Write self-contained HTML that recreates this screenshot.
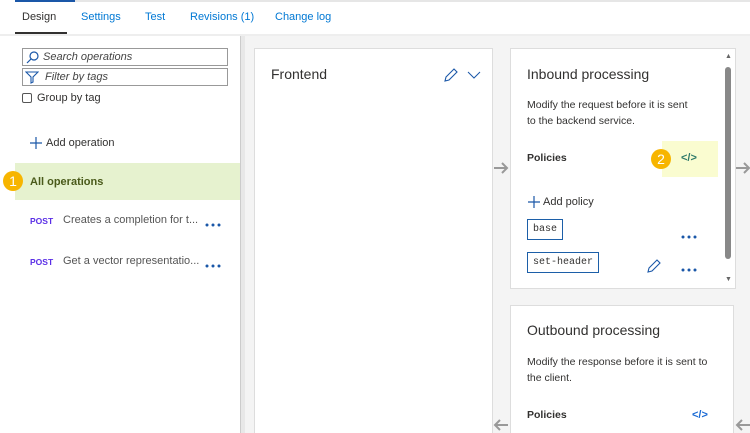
<!DOCTYPE html>
<html><head><meta charset="utf-8"><style>
*{box-sizing:border-box;margin:0;padding:0}
html,body{width:750px;height:433px;overflow:hidden}
body{background:#fff;font-family:"Liberation Sans",sans-serif;position:relative;font-size:11px;color:#323130}
.a{position:absolute}
.tab{position:absolute;top:11px;font-size:11px;color:#0078d4}
.card{position:absolute;background:#fff;border:1px solid #ddd}
.pol{position:absolute;border:1px solid #1c5fa8;font-family:"Liberation Mono",monospace;font-size:10px;padding:4px 5px;color:#323130}
.badge{position:absolute;width:20px;height:20px;border-radius:50%;background:#f7b500;color:#fff;font-size:14px;text-align:center;line-height:20px}
</style></head><body>
<div class="a" style="left:15px;top:0;width:60px;height:2px;background:#1a57a8"></div>
<div class="a" style="left:75px;top:0;width:675px;height:2px;background:#e6e6e6"></div>
<div class="tab" style="left:22px;color:#323130">Design</div>
<div class="a" style="left:15px;top:32px;width:52px;height:2px;background:#323130"></div>
<div class="tab" style="left:81px">Settings</div>
<div class="tab" style="left:145px">Test</div>
<div class="tab" style="left:190px">Revisions (1)</div>
<div class="tab" style="left:275px">Change log</div>
<div class="a" style="left:0;top:34px;width:750px;height:2px;background:#eee"></div>
<div class="a" style="left:240px;top:36px;width:5px;height:397px;background:#e8e8e8;border-left:1px solid #ccc"></div>
<div class="a" style="left:245px;top:36px;width:505px;height:397px;background:#f4f4f4"></div>
<!-- left -->
<div class="a" style="left:22px;top:48px;width:206px;height:18px;border:1px solid #999;font-style:italic;font-size:11px;padding:2px 0 0 20px;color:#444">Search operations</div>
<svg class="a" style="left:26px;top:50px" width="14" height="14"><circle cx="8" cy="6" r="4" fill="none" stroke="#1a57a8" stroke-width="1.2"/><path d="M5 9L1 13" stroke="#1a57a8" stroke-width="1.2"/></svg>
<div class="a" style="left:22px;top:68px;width:206px;height:18px;border:1px solid #999;font-style:italic;font-size:11px;padding:2px 0 0 22px;color:#444">Filter by tags</div>
<svg class="a" style="left:25px;top:70px" width="14" height="14"><path d="M1 2H13L8 7V12L6 13V7Z" fill="none" stroke="#1a57a8" stroke-width="1.1"/></svg>
<div class="a" style="left:22px;top:93px;width:10px;height:10px;border:1px solid #555;border-radius:2px"></div>
<div class="a" style="left:37px;top:92px;font-size:11px">Group by tag</div>
<svg class="a" style="left:29px;top:136px" width="14" height="14"><path d="M7 1V13M1 7H13" stroke="#1a57a8" stroke-width="1.2"/></svg>
<div class="a" style="left:46px;top:137px">Add operation</div>
<div class="a" style="left:15px;top:163px;width:225px;height:37px;background:#e6f2cf"></div>
<div class="badge" style="left:3px;top:171px">1</div>
<div class="a" style="left:30px;top:176px;font-weight:bold;color:#4a5a1a">All operations</div>
<div class="a" style="left:30px;top:216px;font-size:8.5px;font-weight:bold;color:#5a2ee6">POST</div>
<div class="a" style="left:63px;top:214px;color:#555">Creates a completion for t...</div>
<svg class="a" style="left:205px;top:223px" width="16" height="4"><circle cx="2" cy="2" r="1.5" fill="#1a57a8"/><circle cx="8" cy="2" r="1.5" fill="#1a57a8"/><circle cx="14" cy="2" r="1.5" fill="#1a57a8"/></svg>
<div class="a" style="left:30px;top:257px;font-size:8.5px;font-weight:bold;color:#5a2ee6">POST</div>
<div class="a" style="left:63px;top:255px;color:#555">Get a vector representatio...</div>
<svg class="a" style="left:205px;top:264px" width="16" height="4"><circle cx="2" cy="2" r="1.5" fill="#1a57a8"/><circle cx="8" cy="2" r="1.5" fill="#1a57a8"/><circle cx="14" cy="2" r="1.5" fill="#1a57a8"/></svg>
<!-- frontend -->
<div class="card" style="left:254px;top:48px;width:239px;height:390px"></div>
<div class="a" style="left:271px;top:66px;font-size:14px">Frontend</div>
<svg class="a" style="left:443px;top:67px" width="40" height="16"><path d="M2 14L3 10L11 2L14 5L6 13Z" fill="none" stroke="#1a57a8" stroke-width="1.1"/><path d="M25 5L31 11L37 5" fill="none" stroke="#1a57a8" stroke-width="1"/></svg>
<!-- arrows -->
<svg class="a" style="left:493px;top:161px" width="16" height="14"><path d="M1 7H14M9 2L14 7L9 12" fill="none" stroke="#999" stroke-width="2"/></svg>
<svg class="a" style="left:735px;top:161px" width="16" height="14"><path d="M1 7H14M9 2L14 7L9 12" fill="none" stroke="#999" stroke-width="2"/></svg>
<svg class="a" style="left:493px;top:418px" width="16" height="14"><path d="M15 7H2M7 2L2 7L7 12" fill="none" stroke="#999" stroke-width="2"/></svg>
<svg class="a" style="left:735px;top:418px" width="16" height="14"><path d="M15 7H2M7 2L2 7L7 12" fill="none" stroke="#999" stroke-width="2"/></svg>
<!-- inbound -->
<div class="card" style="left:510px;top:48px;width:226px;height:241px"></div>
<div class="a" style="left:527px;top:66px;font-size:14px">Inbound processing</div>
<div class="a" style="left:527px;top:97px;font-size:10.5px;line-height:16px">Modify the request before it is sent<br>to the backend service.</div>
<div class="a" style="left:527px;top:152px;font-weight:bold;font-size:10.5px">Policies</div>
<div class="a" style="left:662px;top:141px;width:56px;height:36px;background:#fafcd0"></div>
<div class="badge" style="left:651px;top:149px">2</div>
<div class="a" style="left:681px;top:152px;color:#2f7a6a;font-size:11px;font-weight:bold">&lt;/&gt;</div>
<svg class="a" style="left:527px;top:195px" width="14" height="14"><path d="M7 1V13M1 7H13" stroke="#1a57a8" stroke-width="1.2"/></svg>
<div class="a" style="left:543px;top:196px;font-size:11px">Add policy</div>
<div class="pol" style="left:527px;top:219px">base</div>
<svg class="a" style="left:681px;top:235px" width="16" height="4"><circle cx="2" cy="2" r="1.5" fill="#1a57a8"/><circle cx="8" cy="2" r="1.5" fill="#1a57a8"/><circle cx="14" cy="2" r="1.5" fill="#1a57a8"/></svg>
<div class="pol" style="left:527px;top:252px">set-header</div>
<svg class="a" style="left:646px;top:258px" width="16" height="16"><path d="M2 14L3 10L11 2L14 5L6 13Z" fill="none" stroke="#1a57a8" stroke-width="1.1"/></svg>
<svg class="a" style="left:681px;top:268px" width="16" height="4"><circle cx="2" cy="2" r="1.5" fill="#1a57a8"/><circle cx="8" cy="2" r="1.5" fill="#1a57a8"/><circle cx="14" cy="2" r="1.5" fill="#1a57a8"/></svg>
<div class="a" style="left:725px;top:53px;font-size:7px;color:#666">▲</div>
<div class="a" style="left:725px;top:67px;width:6px;height:192px;border-radius:3px;background:#888"></div>
<div class="a" style="left:725px;top:276px;font-size:7px;color:#666">▼</div>
<!-- outbound -->
<div class="card" style="left:510px;top:305px;width:224px;height:135px"></div>
<div class="a" style="left:527px;top:322px;font-size:14px">Outbound processing</div>
<div class="a" style="left:527px;top:354px;font-size:10.5px;line-height:16px">Modify the response before it is sent to<br>the client.</div>
<div class="a" style="left:527px;top:409px;font-weight:bold;font-size:10.5px">Policies</div>
<div class="a" style="left:692px;top:409px;color:#1a6ad4;font-size:11px;font-weight:bold">&lt;/&gt;</div>
</body></html>
